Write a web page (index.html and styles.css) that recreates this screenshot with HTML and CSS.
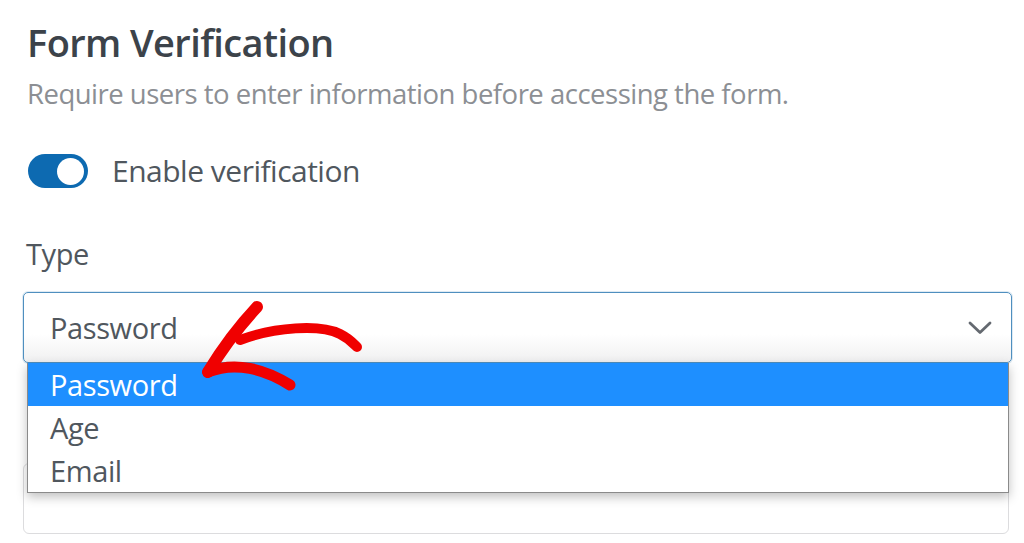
FILE: index.html
```html
<!DOCTYPE html>
<html lang="en">
<head>
<meta charset="utf-8">
<title>Form Verification</title>
<link rel="stylesheet" href="styles.css">
</head>
<body>
<main class="panel">
  <h1 class="title">Form Verification</h1>
  <p class="desc">Require users to enter information before accessing the form.</p>
  <div class="toggle-row">
    <span class="toggle"><span class="knob"></span></span>
    <span class="toggle-label">Enable verification</span>
  </div>
  <div class="field">
    <div class="field-label">Type</div>
    <div class="select-wrap">
      <div class="select">
        <span class="select-value">Password</span>
        <svg class="chevron" width="24" height="14" viewBox="0 0 24 14"><path d="M2 2 L12 11.5 L22 2" fill="none" stroke="#646970" stroke-width="2.8" stroke-linecap="round" stroke-linejoin="round"/></svg>
      </div>
      <div class="input-below"></div>
      <ul class="menu">
        <li class="opt active">Password</li>
        <li class="opt">Age</li>
        <li class="opt">Email</li>
      </ul>
      <svg class="arrow" width="200" height="110" viewBox="0 0 200 110">
        <g fill="none" stroke="#f00000" stroke-linecap="round" stroke-linejoin="round">
          <path d="M67 16 C 52 32, 32 58, 18 81" stroke-width="12"/>
          <path d="M18 81 C 45 70, 75 78, 100 94" stroke-width="11"/>
          <path d="M50 49 C 85 36, 130 33, 150 43 C 160 48, 164 53, 167 56" stroke-width="10"/>
        </g>
      </svg>
    </div>
  </div>
</main>
</body>
</html>
```
FILE: styles.css
```css
* { box-sizing: border-box; }
html, body { margin: 0; padding: 0; background: #ffffff; }
body {
  width: 1024px;
  height: 543px;
  overflow: hidden;
  font-family: "Open Sans", "Noto Sans", sans-serif;
}
.panel {
  padding: 18px 12px 0 23px;
}
.title {
  margin: 0 0 0 4px;
  font-size: 38px;
  font-weight: 600;
  line-height: 48px;
  color: #3c434a;
  letter-spacing: -0.6px;
}
.desc {
  margin: 8px 0 0 4px;
  font-size: 27.5px;
  line-height: 40px;
  color: #8c8f94;
  letter-spacing: -0.5px;
}
.toggle-row {
  display: flex;
  align-items: center;
  gap: 24px;
  margin: 37px 0 0 5px;
  height: 40px;
}
.toggle {
  display: flex;
  align-items: center;
  justify-content: flex-end;
  width: 60px;
  height: 34px;
  border-radius: 17px;
  background: #0d6ab1;
  padding: 0 4px;
}
.knob {
  width: 27px;
  height: 27px;
  border-radius: 50%;
  background: #ffffff;
}
.toggle-label {
  font-size: 30px;
  color: #50575e;
  letter-spacing: -0.5px;
  line-height: 40px;
}
.field { margin-top: 43px; }
.field-label {
  margin-left: 3px;
  font-size: 29px;
  line-height: 40px;
  color: #50575e;
  letter-spacing: -0.4px;
}
.select-wrap {
  position: relative;
  margin-top: 18px;
}
.select {
  display: flex;
  align-items: center;
  justify-content: space-between;
  height: 71px;
  border: 1.5px solid #4f8fbf;
  border-radius: 5px;
  padding: 0 19px 0 26px;
  background: linear-gradient(#ffffff 60%, #f0f0f1);
  box-shadow: 0 0 0 1px rgba(34,113,177,0.15);
}
.select-value {
  font-size: 29px;
  color: #50575e;
  letter-spacing: -0.4px;
}
.input-below {
  margin-top: 100px;
  height: 71px;
  border: 1.5px solid #dcdcde;
  border-radius: 6px;
  margin-right: 3px;
}
.menu {
  position: absolute;
  left: 4px;
  right: 3px;
  top: 71px;
  margin: 0;
  padding: 0;
  list-style: none;
  background: #ffffff;
  border: 1.5px solid #8a8a8a;
  border-top: none;
  box-shadow: 0 4px 10px rgba(0,0,0,0.25);
}
.opt {
  height: 43px;
  line-height: 43px;
  padding-left: 22px;
  font-size: 29px;
  color: #50575e;
  letter-spacing: -0.4px;
}
.opt.active {
  background: #1e8fff;
  color: #ffffff;
}
.arrow {
  position: absolute;
  left: 167px;
  top: -1px;
}
```
